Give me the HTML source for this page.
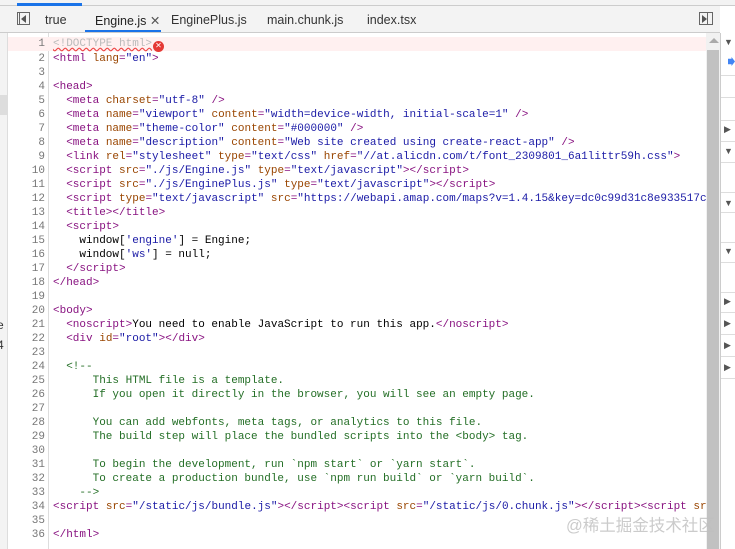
<!DOCTYPE html>
<html><head><style>
body{margin:0;width:735px;height:549px;overflow:hidden;background:#fff;font-family:"Liberation Sans",sans-serif;position:relative}
.top{position:absolute;left:0;top:0;width:735px;height:5px;background:#f3f3f3;border-bottom:1px solid #ccc}
.blue{position:absolute;left:17px;top:3px;width:65px;height:3px;background:#1a73e8}
.tabs{position:absolute;left:0;top:6px;width:720px;height:26px;background:#f3f3f3;border-bottom:1px solid #ccc}
.tab{position:absolute;top:7px;font-size:12.5px;color:#333}
.lp{position:absolute;left:0;top:33px;width:7px;height:516px;background:#f3f3f3;border-right:1px solid #ddd}
.gut{position:absolute;left:8px;top:33px;width:40px;height:516px;border-right:1px solid #ddd;background:#fff}
.code{position:absolute;left:0;top:37px;font-family:"Liberation Mono",monospace;font-size:11px;line-height:14px;white-space:pre}
.ln{display:inline-block;width:45px;text-align:right;color:#777;margin-right:8px}
.t{color:#881280}.a{color:#994500}.v{color:#1a1aa6}.c{color:#236e25}
.sb{position:absolute;left:706px;top:33px;width:14px;height:516px;background:#f1f1f1}
.thumb{position:absolute;left:707px;top:50px;width:12px;height:499px;background:#c1c1c1}
.rp{position:absolute;left:720px;top:33px;width:15px;height:516px;background:#fff;border-left:1px solid #ccc}
.m{position:absolute;left:724px;font-size:9px;color:#555}
.sep{position:absolute;left:721px;width:14px;height:1px;background:#ddd}
</style></head><body>
<div class="top"></div><div class="blue"></div>
<div class="tabs">
<div style="position:absolute;left:17px;top:6px;width:11px;height:11px;border:1px solid #666"></div>
<div style="position:absolute;left:19px;top:7px;width:1px;height:11px;background:#666"></div>
<div style="position:absolute;left:21px;top:9px;width:0;height:0;border-top:4px solid transparent;border-bottom:4px solid transparent;border-right:5px solid #555"></div>
<div class="tab" style="left:45px">true</div>
<div class="tab" style="left:95px;color:#222">Engine.js <span style="color:#555">✕</span></div>
<div style="position:absolute;left:85px;top:24px;width:76px;height:2px;background:#1a73e8"></div>
<div class="tab" style="left:171px">EnginePlus.js</div>
<div class="tab" style="left:267px">main.chunk.js</div>
<div class="tab" style="left:367px">index.tsx</div>
<div style="position:absolute;left:699px;top:6px;width:12px;height:11px;border:1px solid #666"></div>
<div style="position:absolute;left:707px;top:7px;width:1px;height:11px;background:#666"></div>
<div style="position:absolute;left:702px;top:9px;width:0;height:0;border-top:4px solid transparent;border-bottom:4px solid transparent;border-left:5px solid #555"></div>
</div>
<div class="lp"></div>
<div style="position:absolute;left:0;top:95px;width:7px;height:20px;background:#ddd"></div>
<div style="position:absolute;left:-3px;top:318px;font-size:12px;color:#333">e</div>
<div style="position:absolute;left:-3px;top:338px;font-size:12px;color:#333">4</div>
<div class="gut"></div>
<div style="position:absolute;left:8px;top:37px;width:698px;height:14px;background:#fff0f0"></div>
<div class="code"><span class="ln">1</span><span style="color:#bbb;text-decoration:underline wavy #e44">&lt;!DOCTYPE html&gt;</span><span style="display:inline-block;width:11px;height:11px;border-radius:50%;background:#e53935;color:#fff;font-size:8px;line-height:11px;text-align:center;vertical-align:-2px;margin-left:1px">✕</span>
<span class="ln">2</span><span class="t">&lt;html</span> <span class="a">lang</span><span class="t">=</span><span class="v">"en"</span><span class="t">&gt;</span>
<span class="ln">3</span>
<span class="ln">4</span><span class="t">&lt;head&gt;</span>
<span class="ln">5</span>  <span class="t">&lt;meta</span> <span class="a">charset</span><span class="t">=</span><span class="v">"utf-8"</span> <span class="t">/&gt;</span>
<span class="ln">6</span>  <span class="t">&lt;meta</span> <span class="a">name</span><span class="t">=</span><span class="v">"viewport"</span> <span class="a">content</span><span class="t">=</span><span class="v">"width=device-width, initial-scale=1"</span> <span class="t">/&gt;</span>
<span class="ln">7</span>  <span class="t">&lt;meta</span> <span class="a">name</span><span class="t">=</span><span class="v">"theme-color"</span> <span class="a">content</span><span class="t">=</span><span class="v">"#000000"</span> <span class="t">/&gt;</span>
<span class="ln">8</span>  <span class="t">&lt;meta</span> <span class="a">name</span><span class="t">=</span><span class="v">"description"</span> <span class="a">content</span><span class="t">=</span><span class="v">"Web site created using create-react-app"</span> <span class="t">/&gt;</span>
<span class="ln">9</span>  <span class="t">&lt;link</span> <span class="a">rel</span><span class="t">=</span><span class="v">"stylesheet"</span> <span class="a">type</span><span class="t">=</span><span class="v">"text/css"</span> <span class="a">href</span><span class="t">=</span><span class="v">"//at.alicdn.com/t/font_2309801_6a1littr59h.css"</span><span class="t">&gt;</span>
<span class="ln">10</span>  <span class="t">&lt;script</span> <span class="a">src</span><span class="t">=</span><span class="v">"./js/Engine.js"</span> <span class="a">type</span><span class="t">=</span><span class="v">"text/javascript"</span><span class="t">&gt;&lt;/script&gt;</span>
<span class="ln">11</span>  <span class="t">&lt;script</span> <span class="a">src</span><span class="t">=</span><span class="v">"./js/EnginePlus.js"</span> <span class="a">type</span><span class="t">=</span><span class="v">"text/javascript"</span><span class="t">&gt;&lt;/script&gt;</span>
<span class="ln">12</span>  <span class="t">&lt;script</span> <span class="a">type</span><span class="t">=</span><span class="v">"text/javascript"</span> <span class="a">src</span><span class="t">=</span><span class="v">"https://webapi.amap.com/maps?v=1.4.15&amp;key=dc0c99d31c8e933517c</span>
<span class="ln">13</span>  <span class="t">&lt;title&gt;&lt;/title&gt;</span>
<span class="ln">14</span>  <span class="t">&lt;script&gt;</span>
<span class="ln">15</span>    window[<span class="v">'engine'</span>] = Engine;
<span class="ln">16</span>    window[<span class="v">'ws'</span>] = null;
<span class="ln">17</span>  <span class="t">&lt;/script&gt;</span>
<span class="ln">18</span><span class="t">&lt;/head&gt;</span>
<span class="ln">19</span>
<span class="ln">20</span><span class="t">&lt;body&gt;</span>
<span class="ln">21</span>  <span class="t">&lt;noscript&gt;</span>You need to enable JavaScript to run this app.<span class="t">&lt;/noscript&gt;</span>
<span class="ln">22</span>  <span class="t">&lt;div</span> <span class="a">id</span><span class="t">=</span><span class="v">"root"</span><span class="t">&gt;&lt;/div&gt;</span>
<span class="ln">23</span>
<span class="ln">24</span><span class="c">  &lt;!--</span>
<span class="ln">25</span><span class="c">      This HTML file is a template.</span>
<span class="ln">26</span><span class="c">      If you open it directly in the browser, you will see an empty page.</span>
<span class="ln">27</span>
<span class="ln">28</span><span class="c">      You can add webfonts, meta tags, or analytics to this file.</span>
<span class="ln">29</span><span class="c">      The build step will place the bundled scripts into the &lt;body&gt; tag.</span>
<span class="ln">30</span>
<span class="ln">31</span><span class="c">      To begin the development, run `npm start` or `yarn start`.</span>
<span class="ln">32</span><span class="c">      To create a production bundle, use `npm run build` or `yarn build`.</span>
<span class="ln">33</span><span class="c">    --&gt;</span>
<span class="ln">34</span><span class="t">&lt;script</span> <span class="a">src</span><span class="t">=</span><span class="v">"/static/js/bundle.js"</span><span class="t">&gt;&lt;/script&gt;&lt;script</span> <span class="a">src</span><span class="t">=</span><span class="v">"/static/js/0.chunk.js"</span><span class="t">&gt;&lt;/script&gt;&lt;script</span> <span class="a">sr</span>
<span class="ln">35</span>
<span class="ln">36</span><span class="t">&lt;/html&gt;</span></div>
<div class="sb"></div><div class="thumb"></div>
<div style="position:absolute;left:709px;top:38px;width:0;height:0;border-left:5px solid transparent;border-right:5px solid transparent;border-bottom:5px solid #aaa"></div>
<div style="position:absolute;left:566px;top:512px;font-family:'Liberation Sans','Noto Sans CJK SC',sans-serif;font-size:16.5px;color:rgba(190,190,190,0.8)">@稀土掘金技术社区</div>
<div class="rp"></div>
<div class="m" style="top:37px">▼</div>
<div style="position:absolute;left:728px;top:57px;width:7px;height:9px;background:#4285f4;clip-path:polygon(0 20%,50% 20%,50% 0,100% 50%,50% 100%,50% 80%,0 80%)"></div>
<div class="sep" style="top:75px"></div><div class="sep" style="top:97px"></div>
<div class="sep" style="top:120px"></div>
<div class="m" style="top:124px">▶</div>
<div class="sep" style="top:141px"></div>
<div class="m" style="top:146px">▼</div>
<div class="sep" style="top:162px"></div>
<div class="sep" style="top:192px"></div>
<div class="m" style="top:198px">▼</div>
<div class="sep" style="top:212px"></div>
<div class="sep" style="top:242px"></div>
<div class="m" style="top:246px">▼</div>
<div class="sep" style="top:262px"></div>
<div class="sep" style="top:292px"></div>
<div class="m" style="top:296px">▶</div>
<div class="sep" style="top:312px"></div>
<div class="m" style="top:318px">▶</div>
<div class="sep" style="top:334px"></div>
<div class="m" style="top:340px">▶</div>
<div class="sep" style="top:356px"></div>
<div class="m" style="top:362px">▶</div>
<div class="sep" style="top:378px"></div>
</body></html>
